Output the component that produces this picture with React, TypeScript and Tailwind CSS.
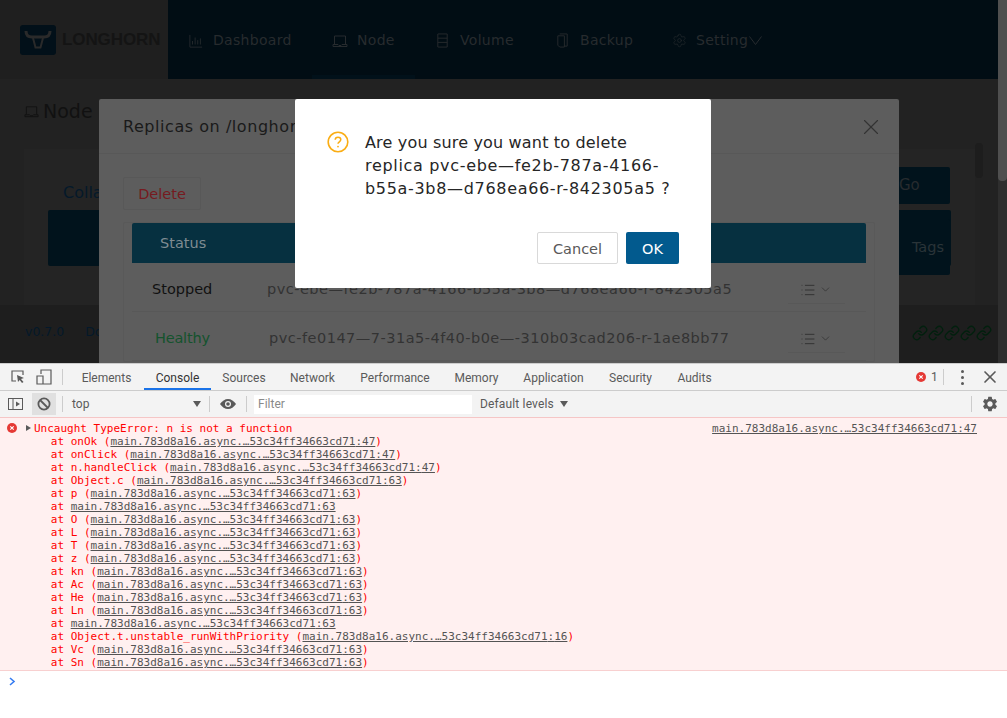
import { MdSettings } from "react-icons/md";
import { Settings, X, ChevronDown, List, Link } from "lucide-react";

const TABS = [
  { label: "Elements", width: "w-[75px]" },
  { label: "Console", width: "w-[67px]", active: true },
  { label: "Sources", width: "w-[66px]" },
  { label: "Network", width: "w-[71px]" },
  { label: "Performance", width: "w-[94px]" },
  { label: "Memory", width: "w-[69px]" },
  { label: "Application", width: "w-[85px]" },
  { label: "Security", width: "w-[69px]" },
  { label: "Audits", width: "w-[59px]" },
];

const SRC = "main.783d8a16.async.…53c34ff34663cd71";

const TRACE = [
  { fn: "onOk", line: 47 },
  { fn: "onClick", line: 47 },
  { fn: "n.handleClick", line: 47 },
  { fn: "Object.c", line: 63 },
  { fn: "p", line: 63 },
  { fn: "", line: 63 },
  { fn: "O", line: 63 },
  { fn: "L", line: 63 },
  { fn: "T", line: 63 },
  { fn: "z", line: 63 },
  { fn: "kn", line: 63 },
  { fn: "Ac", line: 63 },
  { fn: "He", line: 63 },
  { fn: "Ln", line: 63 },
  { fn: "", line: 63 },
  { fn: "Object.t.unstable_runWithPriority", line: 16 },
  { fn: "Vc", line: 63 },
  { fn: "Sn", line: 63 },
];

const sans = "font-['DejaVu_Sans',sans-serif]";

function NavItem({ icon, label, className }: { icon: React.ReactNode; label: string; className: string }) {
  return (
    <div className={`flex items-center pt-[2px] text-[14px] tracking-[0.3px] text-[#272b2e] ${className}`}>
      {icon}
      <span>{label}</span>
    </div>
  );
}

function LogoMark() {
  return (
    <div className="flex h-[30px] w-[36px] items-center justify-center rounded-[3px] bg-[#021019]">
      <svg width="30" height="20" viewBox="0 0 30 20" fill="none" stroke="#2a2a2a">
        <path d="M3 1c0 4 2 6 6 6h12c4 0 6-2 6-6" strokeWidth="3" />
        <path d="M10 8l2.5 9.5h5L20 8" strokeWidth="2" />
      </svg>
    </div>
  );
}

function StrokeIcon({ children, className }: { children: React.ReactNode; className: string }) {
  return (
    <svg viewBox="0 0 16 16" fill="none" stroke="#272b2e" strokeWidth="1" className={className}>
      {children}
    </svg>
  );
}

function LaptopIcon({ className, stroke }: { className: string; stroke?: string }) {
  return (
    <svg viewBox="0 0 16 16" fill="none" stroke={stroke ?? "#272b2e"} strokeWidth="1" className={className}>
      <path d="M2.5 11V3h11v8M1 11.5h5l1 1h2l1-1h5v2H1z" />
    </svg>
  );
}

function TableRow({ status, statusColor, name }: { status: string; statusColor: string; name: string }) {
  return (
    <div className="relative flex h-[49px] items-center border-b border-[#585858] pt-[5px]">
      <span className={`text-[14.5px] ${statusColor} ${status === "Healthy" ? "ml-[23px] w-[114px] tracking-[-0.2px]" : "ml-[20px] w-[115px]"}`}>{status}</span>
      <span className="whitespace-nowrap text-[14.5px] tracking-[0.49px] text-[#333]">{name}</span>
      <div className="ml-auto mr-[34px] flex items-center gap-[3px] text-[#2a2a2a]">
        <List size={16} strokeWidth={1.2} />
        <ChevronDown size={13} strokeWidth={1.2} />
      </div>
      <div className="absolute bottom-[7px] right-[21px] h-px w-[57px] bg-[#585858]" />
    </div>
  );
}

function PageBehind() {
  return (
    <div className={`relative h-[363px] overflow-hidden bg-[#222222] ${sans}`}>
      {/* app header */}
      <div className="flex h-[79px]">
        <div className="flex w-[168px] items-center gap-[6px] bg-[#1f1f1f] pl-[20px]">
          <LogoMark />
          <span className="font-['Liberation_Sans',sans-serif] text-[17px] font-bold tracking-[-0.1px] text-[#141414]">LONGHORN</span>
        </div>
        <div className="relative flex flex-1 items-center bg-[#010d14]">
          <div className="absolute bottom-0 left-[144px] h-[4px] w-[103px] bg-[#01111a]" />
          <NavItem
            className="ml-[21px] w-[143px]"
            label="Dashboard"
            icon={
              <StrokeIcon className="mr-[10px] h-[14px] w-[14px]">
                <path d="M1 1v14h14M4 12V8M7 12V4M10 12V7M13 12V5" />
              </StrokeIcon>
            }
          />
          <NavItem className="w-[103px]" label="Node" icon={<LaptopIcon className="mr-[9px] h-[16px] w-[16px]" />} />
          <NavItem
            className="w-[120px]"
            label="Volume"
            icon={
              <StrokeIcon className="mr-[10px] h-[15px] w-[15px]">
                <path d="M3 1h10v14H3zM3 5.5h10M3 10h10" />
              </StrokeIcon>
            }
          />
          <NavItem
            className="w-[117px]"
            label="Backup"
            icon={
              <StrokeIcon className="mr-[10px] h-[15px] w-[15px]">
                <path d="M5 1h8v13h-3M3 3h7v12H5l-2-2z" />
              </StrokeIcon>
            }
          />
          <NavItem
            className=""
            label="Setting"
            icon={<Settings size={15} strokeWidth={1} className="mr-[9px]" />}
          />
          <svg width="13" height="9" viewBox="0 0 13 9" fill="none" stroke="#272b2e" strokeWidth="1" className="ml-[1px] mt-[2px]">
            <path d="M0.5 0.5l6 8 6-8" />
          </svg>
        </div>
      </div>

      {/* node page heading */}
      <div className="flex items-center pl-[24px] pt-[18px]">
        <LaptopIcon className="h-[15px] w-[15px]" stroke="#111" />
        <span className="ml-[4px] text-[19px] text-[#111]">Node</span>
      </div>

      {/* content card behind the modal */}
      <div className="mx-[24px] mt-[23px] h-[166px] w-[951px] bg-[#242424] px-[24px]">
        <div className="flex h-[61px] items-center pl-[15px] pt-[28px] text-[16px] text-[#04192a]">Colla</div>
        <div className="h-[56px] rounded-[2px] bg-[#01131c]" />
      </div>

      {/* footer bar */}
      <div className="absolute bottom-0 left-0 flex h-[58px] w-full items-center bg-[#1e1e1e] pb-[4px] pl-[25px] text-[12.5px] text-[#04192a]">
        <span className="mr-[21px]">v0.7.0</span>
        <span>Do</span>
      </div>
      <div className="absolute bottom-[22px] right-[15px] flex text-[#02200e]">
        <Link size={16} strokeWidth={2} />
        <Link size={16} strokeWidth={2} />
        <Link size={16} strokeWidth={2} />
        <Link size={16} strokeWidth={2} />
        <Link size={16} strokeWidth={2} />
      </div>

      {/* page scrollbars, dimmed */}
      <div className="absolute right-0 top-0 h-full w-[9px] bg-[#2e2e2e]">
        <div className="h-[181px] w-[9px] rounded-b-[4px] bg-[#4f4f4f]" />
      </div>
      <div className="absolute left-[975px] top-[143px] h-[35px] w-[8px] rounded-[4px] bg-[#1d1d1d]" />

      {/* replicas modal */}
      <div className="absolute left-[99px] top-[99px] h-[264px] w-[800px] rounded-t-[2px] bg-[#5d5d5d]">
        <div className="flex h-[55px] items-center border-b border-[#585858] pl-[24px] pr-[15px] pt-[2px]">
          <span className="text-[16px] tracking-[0.55px] text-[#1a1a1a]">Replicas on /longhorn</span>
          <X size={26} strokeWidth={1} className="ml-auto text-[#333]" />
        </div>
        <div className="pl-[24px] pt-[23px]">
          <div className="flex h-[33px] w-[78px] items-center justify-center rounded-[2px] border border-[#585858] pt-[2px] text-[14.5px] text-[#761a20]">
            Delete
          </div>
        </div>
        <div className="mx-[24px] mt-[12px] rounded-[2px] border border-[#595959] px-[8px]">
          <div className="flex h-[40px] items-center rounded-t-[2px] bg-[#063040] pl-[28px] pt-[1px] text-[14.5px] text-[#7f8c92]">Status</div>
          <TableRow status="Stopped" statusColor="text-[#111]" name="pvc-ebe—fe2b-787a-4166-b55a-3b8—d768ea66-r-842305a5" />
          <TableRow status="Healthy" statusColor="text-[#14532d]" name="pvc-fe0147—7-31a5-4f40-b0e—-310b03cad206-r-1ae8bb77" />
        </div>
      </div>

      {/* Go + Tags peeking out right of the modal */}
      <div className="absolute left-[899px] top-[167px] flex h-[37px] w-[51px] items-center rounded-r-[2px] bg-[#01131c] text-[15px] text-[#272b2e]">Go</div>
      <div className="absolute left-[899px] top-[219px] flex h-[56px] w-[51px] items-center justify-end rounded-r-[2px] bg-[#01131c] pr-[6px] pt-[2px] text-[14.5px] text-[#2a3438]">Tags</div>

      {/* delete confirmation */}
      <div className="absolute left-[295px] top-[99px] h-[189px] w-[416px] rounded-[2px] bg-white">
        <div className="flex pl-[32px] pt-[32px]">
          <svg width="22" height="22" viewBox="0 0 22 22" fill="none" className="shrink-0">
            <circle cx="11" cy="11" r="9.8" stroke="#faad14" strokeWidth="1.6" />
            <path d="M8.2 8.8c0-1.6 1.2-2.6 2.8-2.6s2.8 1 2.8 2.4c0 2.2-2.8 2.2-2.8 4.2" stroke="#faad14" strokeWidth="1.5" />
            <circle cx="11" cy="15.6" r="0.9" fill="#faad14" />
          </svg>
          <p className="ml-[16px] w-[330px] text-[16px] leading-[23px] tracking-[0.17px] text-[#262626]">
            Are you sure you want to delete
            <br />
            <span className="tracking-[0.68px]">replica pvc-ebe—fe2b-787a-4166-</span>
            <br />
            <span className="tracking-[0.68px]">b55a-3b8—d768ea66-r-842305a5 ?</span>
          </p>
        </div>
        <div className="absolute bottom-[24px] right-[32px] flex gap-[8px]">
          <div className="flex h-[32px] w-[81px] items-center justify-center rounded-[2px] border border-[#d9d9d9] pt-[3px] text-[14.5px] text-[#595959]">Cancel</div>
          <div className="flex h-[32px] w-[53px] items-center justify-center rounded-[2px] bg-[#025a8e] pt-[3px] text-[14.5px] text-white">OK</div>
        </div>
      </div>
    </div>
  );
}

function ErrorBadge({ className }: { className: string }) {
  return (
    <svg viewBox="0 0 10 10" className={className}>
      <circle cx="5" cy="5" r="5" fill="#e53935" />
      <path d="M3.3 3.3l3.4 3.4M6.7 3.3l-3.4 3.4" stroke="#fff" strokeWidth="1.1" />
    </svg>
  );
}

function DevTools() {
  return (
    <div className="flex h-[355px] flex-col bg-white font-['Roboto',sans-serif] text-[12px] text-[#5a5a5a]">
      {/* panel tabs */}
      <div className="flex h-[28px] items-center border-y border-[#cccccc] bg-[#f3f3f3]">
        <svg width="16" height="16" viewBox="0 0 16 16" fill="none" stroke="#5a5a5a" strokeWidth="1.2" className="ml-[10px]">
          <path d="M6 12H2V2h11v4" />
          <path d="M7 6l7 3-3 1 2.5 3-1.5 1-2.3-3L8 13z" fill="#5a5a5a" stroke="none" />
        </svg>
        <svg width="16" height="16" viewBox="0 0 16 16" fill="none" stroke="#5a5a5a" strokeWidth="1.2" className="ml-[10px]">
          <path d="M5 5V1h10v14H7M1 7h6v8H1z" />
        </svg>
        <div className="ml-[10px] mr-[6px] h-[16px] w-px bg-[#cccccc]" />
        {TABS.map((tab) => (
          <div
            key={tab.label}
            className={`flex h-full items-center justify-center pt-[2px] ${tab.width} ${tab.active ? "border-b-2 border-[#1a73e8] pt-[4px] text-[#333333]" : ""}`}
          >
            {tab.label}
          </div>
        ))}
        <div className="ml-auto flex items-center">
          <ErrorBadge className="h-[10px] w-[10px]" />
          <span className="ml-[5px] w-[7px]">1</span>
          <div className="ml-[5px] h-[16px] w-px bg-[#cccccc]" />
          <div className="ml-[17px] flex flex-col gap-[3px]">
            <span className="h-[3px] w-[3px] rounded-full bg-[#5a5a5a]" />
            <span className="h-[3px] w-[3px] rounded-full bg-[#5a5a5a]" />
            <span className="h-[3px] w-[3px] rounded-full bg-[#5a5a5a]" />
          </div>
          <X size={20} strokeWidth={2} className="ml-[16px] mr-[7px]" />
        </div>
      </div>

      {/* console toolbar */}
      <div className="flex h-[27px] items-center border-b border-[#f5c6c6] bg-[#f3f3f3]">
        <svg width="16" height="14" viewBox="0 0 16 14" fill="none" stroke="#5a5a5a" strokeWidth="1" className="ml-[8px]">
          <rect x="0.5" y="1.5" width="14" height="11" />
          <path d="M5 2v10" />
          <path d="M8 4.5l4 2.5-4 2.5z" fill="#5a5a5a" stroke="none" />
        </svg>
        <div className="ml-[8px] flex h-[22px] w-[24px] items-center justify-center bg-[#e0e0e0]">
          <svg width="14" height="14" viewBox="0 0 14 14" fill="none" stroke="#5a5a5a" strokeWidth="1.8">
            <circle cx="7" cy="7" r="5.6" />
            <path d="M3 3l8 8" />
          </svg>
        </div>
        <div className="ml-[6px] mr-[9px] h-[16px] w-px bg-[#cccccc]" />
        <span className="w-[121px]">top</span>
        <span className="h-0 w-0 border-x-[4px] border-t-[6px] border-x-transparent border-t-[#5a5a5a]" />
        <div className="ml-[8px] h-[16px] w-px bg-[#cccccc]" />
        <svg width="16" height="10" viewBox="0 0 16 10" className="ml-[10px]">
          <path d="M0 5c2-3 5-5 8-5s6 2 8 5c-2 3-5 5-8 5s-6-2-8-5z" fill="#5a5a5a" />
          <circle cx="8" cy="5" r="3" fill="#f3f3f3" />
          <circle cx="8" cy="5" r="1.8" fill="#5a5a5a" />
        </svg>
        <div className="ml-[10px] mr-[7px] h-[16px] w-px bg-[#cccccc]" />
        <div className="flex h-[19px] w-[218px] items-center bg-white pl-[4px] text-[#8a8a8a]">Filter</div>
        <span className="ml-[8px] tracking-[0.15px]">Default levels</span>
        <span className="ml-[6px] h-0 w-0 border-x-[4px] border-t-[6px] border-x-transparent border-t-[#5a5a5a]" />
        <div className="ml-auto h-[16px] w-px bg-[#cccccc]" />
        <MdSettings size={18} className="ml-[9px] mr-[8px]" />
      </div>

      {/* error message */}
      <div className="border-b border-[#f8d0d0] bg-[#fff0f0] pb-[1px] pl-[34px] pr-[30px] pt-[4px] font-['DejaVu_Sans_Mono',monospace] text-[11px] leading-[13px] text-[#ff0000]">
        <div className="relative flex justify-between">
          <ErrorBadge className="absolute left-[-27px] top-[1px] h-[10px] w-[10px]" />
          <span className="absolute left-[-8px] top-[3px] h-0 w-0 border-y-[3.5px] border-l-[5px] border-y-transparent border-l-[#5a5a5a]" />
          <span>Uncaught TypeError: n is not a function</span>
          <span className="text-[#545454] underline">{SRC}:47</span>
        </div>
        {TRACE.map((row, index) => (
          <div key={index} className="whitespace-pre pl-[16.8px]">
            at {row.fn ? `${row.fn} (` : ""}
            <span className="text-[#545454] underline">{SRC}:{row.line}</span>
            {row.fn ? ")" : ""}
          </div>
        ))}
      </div>

      {/* prompt */}
      <div className="flex-1 pl-[9px] pt-[6px]">
        <svg width="7" height="9" viewBox="0 0 7 9" fill="none" stroke="#367cf1" strokeWidth="1.6">
          <path d="M1 1l4 3.5L1 8" />
        </svg>
      </div>
    </div>
  );
}

export default function App() {
  return (
    <div className="h-[718px] w-[1007px] overflow-hidden">
      <PageBehind />
      <DevTools />
    </div>
  );
}
